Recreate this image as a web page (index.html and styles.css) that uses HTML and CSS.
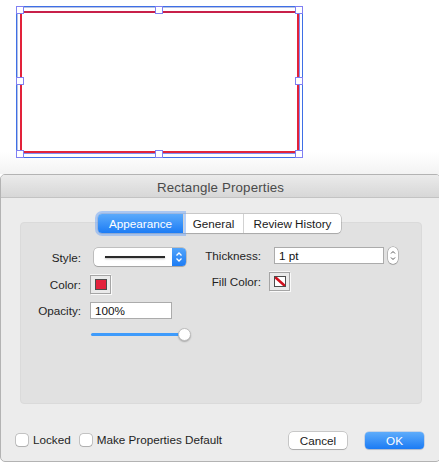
FILE: index.html
```html
<!DOCTYPE html>
<html>
<head>
<meta charset="utf-8">
<link rel="stylesheet" href="styles.css">
</head>
<body>
<div class="canvas">
  <div class="sel">
    <div class="shape"></div>
    <span class="h h-tl"></span><span class="h h-tm"></span><span class="h h-tr"></span>
    <span class="h h-ml"></span><span class="h h-mr"></span>
    <span class="h h-bl"></span><span class="h h-bm"></span><span class="h h-br"></span>
  </div>
</div>
<div class="dialog">
  <div class="titlebar">Rectangle Properties</div>
  <div class="body">
    <div class="tabs-row">
      <div class="tabs">
        <div class="tab active t1">Appearance</div>
        <div class="tab t2">General</div>
        <div class="tab t3">Review History</div>
      </div>
    </div>
    <div class="group">
      <div class="col left">
        <div class="row r-style">
          <span class="lbl">Style:</span>
          <div class="popup">
            <div class="popup-face"><span class="line"></span></div>
            <div class="popup-arrow">
              <svg width="14" height="18" viewBox="0 0 14 18"><polyline points="4.5,7.5 7,5 9.5,7.5" fill="none" stroke="#fff" stroke-width="1.3"/><polyline points="4.5,10.5 7,13 9.5,10.5" fill="none" stroke="#fff" stroke-width="1.3"/></svg>
            </div>
          </div>
        </div>
        <div class="row r-color">
          <span class="lbl">Color:</span>
          <div class="well"><span class="swatch red"></span></div>
        </div>
        <div class="row r-opacity">
          <span class="lbl">Opacity:</span>
          <div class="field f-op">100%</div>
        </div>
        <div class="row r-slider">
          <div class="slider"><span class="track"></span><span class="knob"></span></div>
        </div>
      </div>
      <div class="col right">
        <div class="row r-thick">
          <span class="lbl lbl-r">Thickness:</span>
          <div class="field f-th">1 pt</div>
          <div class="stepper">
            <svg width="10" height="17" viewBox="0 0 10 17"><polyline points="3,6.5 5,4.5 7,6.5" fill="none" stroke="#555" stroke-width="1"/><polyline points="3,10.5 5,12.5 7,10.5" fill="none" stroke="#555" stroke-width="1"/></svg>
          </div>
        </div>
        <div class="row r-fill">
          <span class="lbl lbl-r">Fill Color:</span>
          <div class="well"><span class="swatch none"><svg width="10" height="9" viewBox="0 0 10 9"><line x1="0" y1="0" x2="10" y2="9" stroke="#d0101e" stroke-width="2.6"/></svg></span></div>
        </div>
      </div>
    </div>
    <div class="footer">
      <label class="check"><span class="box"></span><span>Locked</span></label>
      <label class="check c2"><span class="box"></span><span>Make Properties Default</span></label>
      <div class="btn cancel">Cancel</div>
      <div class="btn ok">OK</div>
    </div>
  </div>
</div>
</body>
</html>
```

FILE: styles.css
```css
html, body {
  margin: 0;
  padding: 0;
}
body {
  width: 439px;
  height: 462px;
  overflow: hidden;
  background: #ffffff;
  font-family: "Liberation Sans", Arial, sans-serif;
  font-size: 11.7px;
  color: #222;
}
.canvas {
  height: 174px;
  box-sizing: border-box;
  padding: 6px 0 0 16px;
  background: linear-gradient(to bottom, #ffffff 0, #ffffff 152px, #f3f3f3 174px);
}
.sel {
  position: relative;
  box-sizing: border-box;
  width: 287px;
  height: 152px;
  border: 1px solid #3e6fe6;
  padding: 4px 3px;
  box-shadow: inset 1px 1px 0 #b7c2e4;
}
.shape {
  box-sizing: border-box;
  width: 100%;
  height: 100%;
  border: 2px solid #e2223a;
  border-top-color: #c8204a;
  box-shadow: 1px 1px 0 #8190f2;
  background: #fff;
}
.h {
  position: absolute;
  box-sizing: border-box;
  width: 8px;
  height: 8px;
  background: #fff;
  border: 1px solid #7f80f3;
}
.h-tl { left: -1px; top: -1px; }
.h-tm { left: 138px; top: -1px; }
.h-tr { right: -1px; top: -1px; }
.h-ml { left: -1px; top: 70px; }
.h-mr { right: -1px; top: 70px; }
.h-bl { left: -1px; bottom: -1px; }
.h-bm { left: 138px; bottom: -1px; }
.h-br { right: -1px; bottom: -1px; }

.dialog {
  box-sizing: border-box;
  width: 441px;
  height: 288px;
  border: 1px solid #b3b3b3;
  border-radius: 5px;
  background: #ececec;
  overflow: hidden;
}
.titlebar {
  box-sizing: border-box;
  height: 23px;
  padding-top: 3px;
  line-height: 19px;
  text-align: center;
  font-size: 13.3px;
  letter-spacing: 0.15px;
  color: #4a4a4a;
  background: linear-gradient(to bottom, #ebebeb, #d7d7d7);
  border-bottom: 1px solid #c3c3c3;
}
.body {
  padding-top: 16px;
}
.tabs-row {
  display: flex;
  justify-content: center;
  padding-right: 2px;
  position: relative;
  z-index: 1;
}
.tabs {
  display: flex;
  height: 19px;
  border-radius: 4px;
  background: #fff;
  box-shadow: 0 0 0 0.5px rgba(0,0,0,0.3), 0 1px 1px rgba(0,0,0,0.12);
}
.tab {
  box-sizing: border-box;
  display: flex;
  align-items: center;
  justify-content: center;
  height: 19px;
  color: #1a1a1a;
  border-left: 1px solid #d2d2d2;
}
.tab.t1 { width: 85px; border-left: none; }
.tab.t2 { width: 60px; }
.tab.t3 { width: 98px; border-radius: 0 4px 4px 0; }
.tab.active {
  color: #fff;
  background: linear-gradient(to bottom, #5baafb, #1c7cf5);
  border-radius: 4px 0 0 4px;
  box-shadow: 0 0 0 3px rgba(118, 170, 246, 0.55);
}
.group {
  box-sizing: border-box;
  margin: -11px 0 0 19px;
  width: 402px;
  height: 182px;
  background: #e1e1e1;
  border: 1px solid #dadada;
  border-radius: 4px;
  display: flex;
}
.col {
  display: flex;
  flex-direction: column;
}
.col.left {
  width: 165px;
  padding-top: 25px;
}
.col.right {
  padding-top: 24px;
}
.row {
  display: flex;
  align-items: center;
}
.lbl {
  width: 60px;
  margin-right: 9px;
  text-align: right;
  color: #1f1f1f;
  white-space: nowrap;
}
.lbl-r {
  width: 75px;
  margin-right: 8px;
}
.r-style { height: 18px; }
.r-color { height: 19px; margin-top: 9px; }
.r-opacity { height: 17px; margin-top: 8px; }
.r-slider { height: 13px; margin-top: 9px; padding-left: 70px; }
.r-thick { height: 17px; }
.r-fill { height: 19px; margin-top: 8px; }

.popup {
  display: flex;
  margin-left: 4px;
  width: 92px;
  height: 18px;
  box-sizing: border-box;
  border-radius: 4px;
  background: #fff;
  box-shadow: 0 0 0 0.5px rgba(0,0,0,0.3), 0 1px 1px rgba(0,0,0,0.15);
  overflow: hidden;
}
.popup-face {
  flex: 1;
  display: flex;
  align-items: center;
  padding: 0 7px 0 11px;
}
.line {
  display: block;
  width: 100%;
  height: 1.5px;
  background: #2a2a2a;
  box-shadow: 0 1px 2px rgba(0,0,0,0.25);
}
.popup-arrow {
  width: 14px;
  height: 18px;
  background: linear-gradient(to bottom, #52a4fa, #1d7cf4);
}
.popup-arrow svg { display: block; }

.well {
  box-sizing: border-box;
  width: 21px;
  height: 19px;
  border: 1px solid #a5a5a5;
  background: #eaeaea;
  box-shadow: 1px 1px 0 #fafafa, 0 -1px 0 #f6f6f6;
  display: flex;
  align-items: center;
  justify-content: center;
}
.swatch {
  box-sizing: border-box;
  width: 12px;
  height: 11px;
  border: 1px solid #4c4c4c;
  display: block;
}
.swatch.red { background: #e3223c; }
.swatch.none { background: #fff; }
.swatch svg { display: block; }

.field {
  box-sizing: border-box;
  height: 17px;
  line-height: 15px;
  padding-left: 4px;
  background: #fff;
  border: 1px solid #ababab;
  color: #111;
}
.f-op { width: 82px; }
.f-th { width: 110px; margin-left: 5px; }
.stepper {
  box-sizing: border-box;
  width: 10px;
  height: 17px;
  margin-left: 4px;
  border-radius: 5px;
  background: #fff;
  box-shadow: 0 0 0 0.5px rgba(0,0,0,0.35), 0 1px 1px rgba(0,0,0,0.1);
}
.stepper svg { display: block; }

.slider {
  display: flex;
  align-items: center;
  flex-shrink: 0;
  width: 100px;
  height: 13px;
}
.track {
  flex: 1;
  height: 3px;
  border-radius: 2px;
  background: #3e9bfb;
  margin-right: -6px;
}
.knob {
  position: relative;
  box-sizing: border-box;
  flex-shrink: 0;
  width: 13px;
  height: 13px;
  border-radius: 50%;
  background: #fff;
  border: 0.5px solid #bdbdbd;
  box-shadow: 0 1px 1.5px rgba(0,0,0,0.25);
}

.footer {
  display: flex;
  align-items: center;
  height: 17px;
  margin-top: 28px;
  padding: 0 16px 0 15px;
}
.check {
  display: flex;
  align-items: center;
  color: #1f1f1f;
}
.check .box {
  box-sizing: border-box;
  width: 12px;
  height: 12px;
  margin-right: 5px;
  border-radius: 3px;
  background: #fff;
  box-shadow: 0 0 0 0.5px rgba(0,0,0,0.35), 0 1px 1px rgba(0,0,0,0.1);
  margin-top: -2px;
}
.check span:last-child { margin-top: -2px; }
.check.c2 { margin-left: 9px; }
.btn {
  box-sizing: border-box;
  height: 17px;
  width: 58px;
  border-radius: 4px;
  display: flex;
  align-items: center;
  justify-content: center;
}
.btn.cancel {
  margin-left: auto;
  background: #fff;
  color: #1a1a1a;
  box-shadow: 0 0 0 0.5px rgba(0,0,0,0.3), 0 1px 1px rgba(0,0,0,0.15);
}
.btn.ok {
  margin-left: 18px;
  width: 59px;
  color: #fff;
  background: linear-gradient(to bottom, #5eacfb, #1b7bf4);
  box-shadow: 0 0 0 0.5px rgba(0,80,200,0.3), 0 1px 1px rgba(0,0,0,0.12);
}
```
